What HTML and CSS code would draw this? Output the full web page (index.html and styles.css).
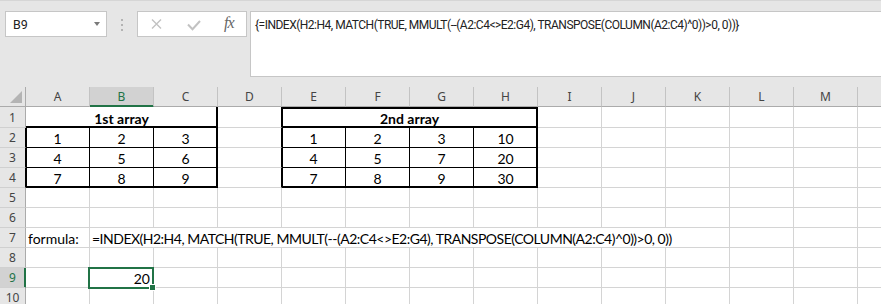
FILE: index.html
```html
<!DOCTYPE html>
<html lang="en">
<head>
    <meta charset="UTF-8">
    <title>Compare two arrays - INDEX MATCH MMULT</title>
    <link rel="stylesheet" href="styles.css">
</head>
<body>
    <div class="formula-bar">
        <div class="name-box">
            <span>B9</span>
            <span class="name-arrow"></span>
        </div>
        <div class="grip"><i></i><i></i><i></i></div>
        <div class="fn-box">
            <svg class="icon-cancel" width="11" height="10" viewBox="0 0 11 10">
                <path d="M1 .5L10 9.5M10 .5L1 9.5" stroke="#c2c2c2" stroke-width="1.4" fill="none"/>
            </svg>
            <svg class="icon-enter" width="14" height="11" viewBox="0 0 14 11">
                <path d="M1 4.5L5.5 9.2L13 1" stroke="#c2c2c2" stroke-width="2" fill="none"/>
            </svg>
            <span class="fx">fx</span>
        </div>
        <div class="formula-input">{=INDEX(H2:H4, MATCH(TRUE, MMULT(--(A2:C4&lt;&gt;E2:G4), TRANSPOSE(COLUMN(A2:C4)^0))&gt;0, 0))}</div>
    </div>

    <div class="sheet">
        <!-- column headers -->
        <div class="corner"><span class="select-all"></span></div>
        <div class="ch">A</div><div class="ch sel">B</div><div class="ch">C</div><div class="ch">D</div>
        <div class="ch">E</div><div class="ch">F</div><div class="ch">G</div><div class="ch">H</div>
        <div class="ch">I</div><div class="ch">J</div><div class="ch">K</div><div class="ch">L</div>
        <div class="ch">M</div><div class="ch"></div>

        <!-- row 1 -->
        <div class="rh">1</div>
        <div class="c ctr title span3 kr kb">1st array</div>
        <div class="c edge"></div>
        <div class="c ctr title span4 kl kt kr kb">2nd array</div>
        <div class="c"></div><div class="c"></div><div class="c"></div><div class="c"></div><div class="c"></div><div class="c"></div>

        <!-- row 2 -->
        <div class="rh edge">2</div>
        <div class="c ctr k kl">1</div><div class="c ctr k">2</div><div class="c ctr k kr">3</div>
        <div class="c edge"></div>
        <div class="c ctr k kl">1</div><div class="c ctr k">2</div><div class="c ctr k">3</div><div class="c ctr k kr">10</div>
        <div class="c"></div><div class="c"></div><div class="c"></div><div class="c"></div><div class="c"></div><div class="c"></div>

        <!-- row 3 -->
        <div class="rh edge">3</div>
        <div class="c ctr k kl">4</div><div class="c ctr k">5</div><div class="c ctr k kr">6</div>
        <div class="c edge"></div>
        <div class="c ctr k kl">4</div><div class="c ctr k">5</div><div class="c ctr k">7</div><div class="c ctr k kr">20</div>
        <div class="c"></div><div class="c"></div><div class="c"></div><div class="c"></div><div class="c"></div><div class="c"></div>

        <!-- row 4 -->
        <div class="rh edge">4</div>
        <div class="c ctr k kl kb">7</div><div class="c ctr k kb">8</div><div class="c ctr k kr kb">9</div>
        <div class="c edge"></div>
        <div class="c ctr k kl kb">7</div><div class="c ctr k kb">8</div><div class="c ctr k kb">9</div><div class="c ctr k kr kb">30</div>
        <div class="c"></div><div class="c"></div><div class="c"></div><div class="c"></div><div class="c"></div><div class="c"></div>

        <!-- row 5 -->
        <div class="rh">5</div>
        <div class="c"></div><div class="c"></div><div class="c"></div><div class="c"></div><div class="c"></div><div class="c"></div><div class="c"></div>
        <div class="c"></div><div class="c"></div><div class="c"></div><div class="c"></div><div class="c"></div><div class="c"></div><div class="c"></div>

        <!-- row 6 -->
        <div class="rh">6</div>
        <div class="c"></div><div class="c"></div><div class="c"></div><div class="c"></div><div class="c"></div><div class="c"></div><div class="c"></div>
        <div class="c"></div><div class="c"></div><div class="c"></div><div class="c"></div><div class="c"></div><div class="c"></div><div class="c"></div>

        <!-- row 7: formula text spills over B..K -->
        <div class="rh">7</div>
        <div class="c">formula:</div>
        <div class="c span10 spill">=INDEX(H2:H4, MATCH(TRUE, MMULT(--(A2:C4&lt;&gt;E2:G4), TRANSPOSE(COLUMN(A2:C4)^0))&gt;0, 0))</div>
        <div class="c"></div><div class="c"></div><div class="c"></div>

        <!-- row 8 -->
        <div class="rh">8</div>
        <div class="c"></div><div class="c"></div><div class="c"></div><div class="c"></div><div class="c"></div><div class="c"></div><div class="c"></div>
        <div class="c"></div><div class="c"></div><div class="c"></div><div class="c"></div><div class="c"></div><div class="c"></div><div class="c"></div>

        <!-- row 9 -->
        <div class="rh sel">9</div>
        <div class="c"></div><div class="c num active">20</div>
        <div class="c"></div><div class="c"></div><div class="c"></div><div class="c"></div><div class="c"></div><div class="c"></div>
        <div class="c"></div><div class="c"></div><div class="c"></div><div class="c"></div><div class="c"></div><div class="c"></div>

        <!-- row 10 -->
        <div class="rh">10</div>
        <div class="c"></div><div class="c"></div><div class="c"></div><div class="c"></div><div class="c"></div><div class="c"></div><div class="c"></div>
        <div class="c"></div><div class="c"></div><div class="c"></div><div class="c"></div><div class="c"></div><div class="c"></div><div class="c"></div>
    </div>
</body>
</html>
```

FILE: styles.css
```css
html, body {
    overflow: hidden;
}

body {
    margin: 0;
    background: #e6e6e6;
    font-family: Lato, "Noto Sans", sans-serif;
}

/* ---- formula bar ---- */
.formula-bar {
    height: 87px;
    box-sizing: border-box;
    border-top: 1px solid #d6d6d6;
    padding: 10px 0 0 5px;
    display: flex;
    align-items: flex-start;
    font-family: Roboto, "Noto Sans", sans-serif;
    font-size: 12px;
    color: #222;
}

.name-box {
    width: 102px;
    height: 26px;
    box-sizing: border-box;
    border: 1px solid #c6c6c6;
    background: #fff;
    padding: 0 6px 0 7px;
    display: flex;
    align-items: center;
    justify-content: space-between;
    font-size: 12.5px;
}

.name-arrow {
    width: 0;
    height: 0;
    border-top: 4px solid #7a7a7a;
    border-left: 3.5px solid transparent;
    border-right: 3.5px solid transparent;
}

.grip {
    width: 30px;
    padding-top: 8px;
    display: flex;
    flex-direction: column;
    align-items: center;
    gap: 3px;
}

.grip i {
    width: 2px;
    height: 2px;
    background: #b3b3b3;
}

.fn-box {
    width: 110px;
    height: 26px;
    box-sizing: border-box;
    border: 1px solid #c6c6c6;
    background: #fff;
    display: flex;
    align-items: center;
}

.icon-cancel {
    margin-left: 13px;
}

.icon-enter {
    margin-left: 25px;
    margin-top: 2px;
}

.fx {
    margin-left: 23px;
    font-family: "Liberation Serif", serif;
    font-style: italic;
    font-size: 16px;
    letter-spacing: -1px;
    color: #666;
    margin-top: -2px;
}

.formula-input {
    flex: 1;
    height: 66px;
    box-sizing: border-box;
    margin-left: 3px;
    border: 1px solid #c6c6c6;
    border-right: none;
    background: #fff;
    padding: 5px 4px;
    line-height: 16px;
    letter-spacing: -0.5px;
    white-space: nowrap;
}

/* ---- worksheet grid ---- */
.sheet {
    display: grid;
    grid-template-columns: 26px repeat(14, 64px);
    grid-template-rows: 20px 21px repeat(10, 20px);
}

.corner,
.ch,
.rh {
    box-sizing: border-box;
    background: #e6e6e6;
    font-family: "Noto Sans", sans-serif;
    font-size: 12px;
    color: #444;
    display: flex;
    align-items: center;
    justify-content: center;
}

.corner {
    border-right: 1px solid #ababab;
    border-bottom: 1px solid #ababab;
    align-items: flex-end;
    justify-content: flex-end;
    padding: 0 3px 3px 0;
}

.select-all {
    width: 12px;
    height: 12px;
    background: #b4b4b4;
    clip-path: polygon(100% 0, 100% 100%, 0 100%);
}

.ch {
    border-right: 1px solid #c3c3c3;
    border-bottom: 1px solid #ababab;
}

.ch.sel {
    background: #d2d2d2;
    color: #217346;
    border-bottom-color: #217346;
    box-shadow: inset 0 -1px #217346;
}

.rh {
    border-right: 1px solid #ababab;
    border-bottom: 1px solid #d0d0d0;
}

.rh.sel {
    background: #d2d2d2;
    color: #217346;
    border-right-color: #217346;
    box-shadow: inset -1px 0 #217346;
}

.c {
    box-sizing: border-box;
    background: #fff;
    border-right: 1px solid #d4d4d4;
    border-bottom: 1px solid #d4d4d4;
    padding: 0 2px;
    font-size: 14px;
    color: #000;
    white-space: nowrap;
    display: flex;
    align-items: flex-end;
    box-shadow:
        inset var(--l, 0) 0 #000,
        inset calc(var(--r, 0px) * -1) 0 #000,
        inset 0 var(--t, 0) #000,
        inset 0 calc(var(--b, 0px) * -1) #000;
}

.ctr { justify-content: center; }
.num { justify-content: flex-end; padding-right: 3px; }
.title { font-weight: bold; }
.spill { letter-spacing: -0.5px; }

.span3 { grid-column: span 3; }
.span4 { grid-column: span 4; }
.span10 { grid-column: span 10; }

/* borders drawn in black */
.edge { border-right-color: #000; }
.k { border-right-color: #000; border-bottom-color: #000; }
.kl { --l: 1px; }
.kt { --t: 2px; }
.kr { --r: 1px; border-right-color: #000; }
.kb { --b: 1px; border-bottom-color: #000; }

/* active cell B9 */
.active {
    position: relative;
}

.active::after {
    content: '';
    position: absolute;
    top: -1px;
    left: -2px;
    right: -1px;
    bottom: -2px;
    border: 2px solid #217346;
}

.active::before {
    content: '';
    position: absolute;
    right: -3px;
    bottom: -4px;
    width: 5px;
    height: 5px;
    background: #217346;
    border: 1px solid #fff;
    z-index: 1;
}
```
